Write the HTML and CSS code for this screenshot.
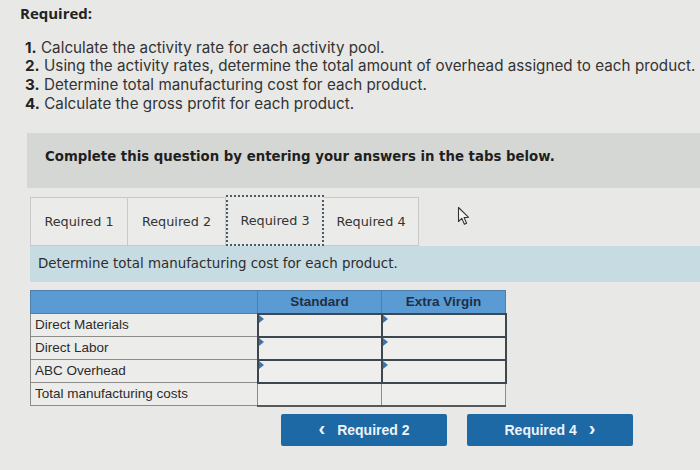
FILE: index.html
```html
<!DOCTYPE html>
<html>
<head>
<meta charset="utf-8">
<link rel="stylesheet" href="styles.css">
</head>
<body>
<div class="page">
  <h1 class="req-title">Required:</h1>
  <ol class="req-list">
    <li><b>1.</b> Calculate the activity rate for each activity pool.</li>
    <li><b>2.</b> Using the activity rates, determine the total amount of overhead assigned to each product.</li>
    <li><b>3.</b> Determine total manufacturing cost for each product.</li>
    <li><b>4.</b> Calculate the gross profit for each product.</li>
  </ol>

  <div class="panel">
    <div class="notice">Complete this question by entering your answers in the tabs below.</div>

    <div class="tabs">
      <div class="tab">Required 1</div>
      <div class="tab">Required 2</div>
      <div class="tab active">Required 3</div>
      <div class="tab">Required 4</div>
      <svg class="cursor" width="14" height="20" viewBox="0 0 14 20">
        <path d="M1.5 1.5 L1.5 15.5 L4.8 12.4 L7.4 18.2 L9.6 17.2 L7.1 11.6 L11.6 11.3 Z" fill="#f4f4f4" stroke="#333" stroke-width="1.1" stroke-linejoin="round"/>
      </svg>
    </div>

    <div class="band">Determine total manufacturing cost for each product.</div>

    <table class="cost-table">
      <thead>
        <tr><th class="lbl"></th><th>Standard</th><th>Extra Virgin</th></tr>
      </thead>
      <tbody>
        <tr><td class="lbl">Direct Materials</td><td class="inp"></td><td class="inp"></td></tr>
        <tr><td class="lbl">Direct Labor</td><td class="inp"></td><td class="inp"></td></tr>
        <tr><td class="lbl">ABC Overhead</td><td class="inp"></td><td class="inp"></td></tr>
        <tr><td class="lbl">Total manufacturing costs</td><td class="tot"></td><td class="tot"></td></tr>
      </tbody>
    </table>

    <div class="nav">
      <button class="btn"><span class="chev">&lsaquo;</span> Required 2</button>
      <button class="btn">Required 4 <span class="chev">&rsaquo;</span></button>
    </div>
  </div>
</div>
</body>
</html>
```

FILE: styles.css
```css
html, body {
  margin: 0;
  padding: 0;
}
body {
  background: #e8e9e7;
  width: 700px;
  height: 470px;
  overflow: hidden;
  color: #2a2a2a;
}
.page {
  padding-top: 3px;
}
.req-title {
  margin: 0 0 0 20px;
  font-family: "Open Sans", "Liberation Sans", sans-serif;
  font-weight: 700;
  font-size: 15px;
  line-height: 20px;
  color: #222;
}
.req-list {
  list-style: none;
  margin: 15.5px 0 0 25px;
  padding: 0;
  font-family: Inter, "Open Sans", sans-serif;
  font-size: 15.2px;
  line-height: 18.7px;
  color: #333;
  white-space: nowrap;
  letter-spacing: 0.03px;
}
.req-list b {
  font-weight: 700;
  color: #222;
}
.panel {
  margin: 19.5px 0 0 27px;
}
.notice {
  background: #d5d7d4;
  height: 55px;
  box-sizing: border-box;
  padding: 15px 0 0 18px;
  font-family: "DejaVu Sans", Verdana, sans-serif;
  font-weight: 700;
  font-size: 13.3px;
  line-height: 17px;
  color: #1f1f1f;
}
.tabs {
  position: relative;
  display: flex;
  align-items: flex-start;
  margin: 9px 0 0 3px;
  height: 49px;
}
.tab {
  box-sizing: border-box;
  width: 98px;
  height: 49px;
  border: 1px solid #c9cac8;
  border-left: none;
  background: #ebecea;
  font-family: "DejaVu Sans", Verdana, sans-serif;
  font-size: 12.8px;
  color: #333;
  display: flex;
  align-items: center;
  justify-content: center;
}
.tab:first-child {
  border-left: 1px solid #c9cac8;
}
.tab.active {
  border: 2px dotted #4a5a66;
  background: #e9eae8;
  margin-top: -2px;
  height: 51px;
}
.tab:nth-child(4) {
  width: 95px;
}
.cursor {
  position: absolute;
  left: 427px;
  top: 9px;
}
.band {
  background: #c6dbe2;
  height: 36px;
  box-sizing: border-box;
  margin-left: 3px;
  padding: 9px 0 0 8px;
  font-family: "DejaVu Sans", Verdana, sans-serif;
  font-size: 13.4px;
  line-height: 18px;
  color: #2d2d2d;
}
.cost-table {
  margin: 8px 0 0 3px;
  border-collapse: collapse;
  font-family: "Liberation Sans", Arial, sans-serif;
  font-size: 13.5px;
}
.cost-table th {
  background: #5b9bd3;
  height: 22px;
  padding: 0;
  font-weight: 700;
  font-size: 13.5px;
  line-height: 16px;
  color: #1f2f44;
  border: 1px solid #4f7fa8;
  text-align: center;
  width: 123px;
}
.cost-table th.lbl {
  width: 226px;
}
.cost-table td {
  height: 21px;
  padding: 0;
  line-height: 16px;
  border: 1px solid #8c8c8a;
  background: #ecedeb;
}
.cost-table td.lbl {
  padding-left: 4px;
  color: #2b2b2b;
  vertical-align: middle;
}
.cost-table td.inp {
  border: 2px solid #3d4750;
  background: #eeefed;
  position: relative;
}
.cost-table td.inp::before {
  content: "";
  position: absolute;
  left: 0;
  top: 0;
  border-top: 4px solid transparent;
  border-bottom: 4px solid transparent;
  border-left: 5px solid #3a75b0;
}
.cost-table td.tot {
  border: 1px solid #8c8c8a;
  border-bottom: 2px solid #55595c;
  background: #eeefed;
}
.nav {
  display: flex;
  gap: 20px;
  margin: 7px 0 0 254px;
}
.btn {
  width: 166px;
  height: 32px;
  border: none;
  border-radius: 2px;
  background: #1c69a6;
  color: #eef3f8;
  font-family: "Liberation Sans", Arial, sans-serif;
  font-weight: 700;
  font-size: 14px;
  padding: 0;
  display: flex;
  align-items: center;
  justify-content: center;
  gap: 12px;
}
.chev {
  font-size: 20px;
  line-height: 20px;
  margin-top: -3px;
}
```
